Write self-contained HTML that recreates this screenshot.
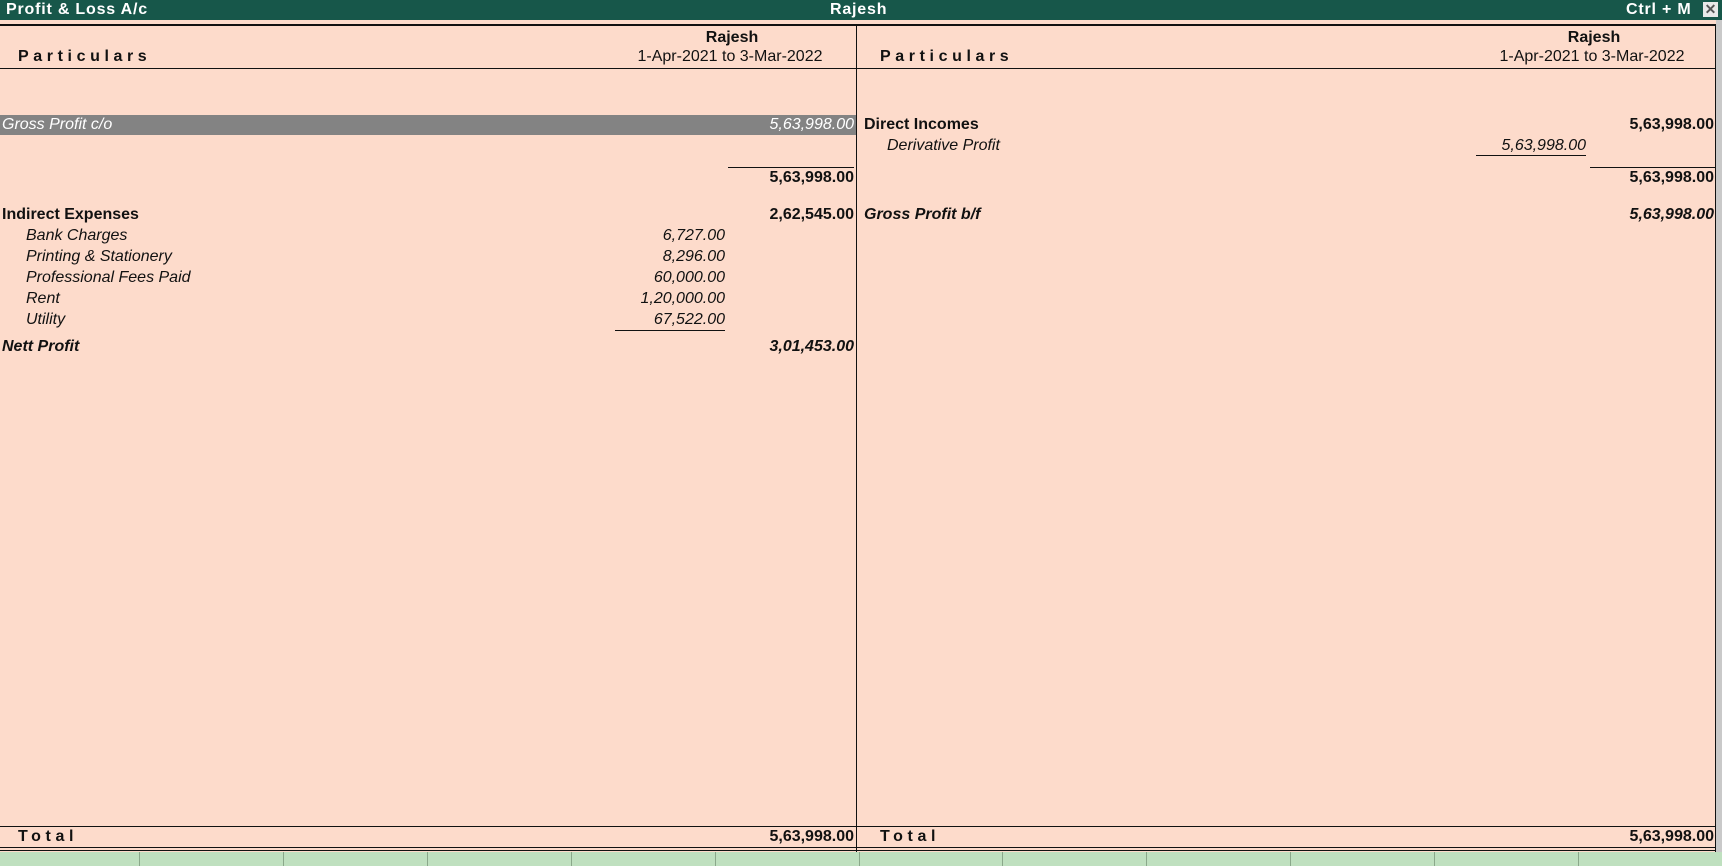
<!DOCTYPE html><html><head><style>
*{margin:0;padding:0;box-sizing:border-box}
body{width:1722px;height:866px;background:#fddbcb;font-family:"Liberation Sans",Arial,sans-serif;font-size:16px;color:#111;position:relative;overflow:hidden}
.a{position:absolute;white-space:nowrap;line-height:20px}
.r{text-align:right}
.b{font-weight:bold}.i{font-style:italic}
.h{position:absolute;background:#111}
.t{letter-spacing:4.6px;font-weight:bold}
</style></head><body>
<div style="position:absolute;left:0;top:0;width:1722px;height:20px;background:#17574a;color:#fff;font-weight:bold;font-size:16px">
<span class="a" style="left:6px;top:0;line-height:20px;letter-spacing:0.8px">Profit &amp; Loss A/c</span>
<span class="a" style="left:830px;top:0;line-height:20px;letter-spacing:0.8px">Rajesh</span>
<span class="a" style="left:1626px;top:0;line-height:20px;letter-spacing:0.8px">Ctrl + M</span>
<span style="position:absolute;left:1703px;top:2px;width:15px;height:15px;background:#e8e8e8;color:#555;font-size:14px;line-height:15px;text-align:center">✕</span>
</div>
<div class="h" style="left:0;top:24px;width:1716px;height:2px"></div>
<div class="h" style="left:1715px;top:24px;width:1px;height:828px"></div>
<div class="h" style="left:856px;top:26px;width:1px;height:826px"></div>
<div class="a b" style="left:680px;top:28px;width:104px;text-align:center">Rajesh</div>
<div class="a" style="left:625px;top:47px;width:210px;text-align:center">1-Apr-2021 to 3-Mar-2022</div>
<div class="a t" style="left:18px;top:47px">Particulars</div>
<div class="a b" style="left:1542px;top:28px;width:104px;text-align:center">Rajesh</div>
<div class="a" style="left:1487px;top:47px;width:210px;text-align:center">1-Apr-2021 to 3-Mar-2022</div>
<div class="a t" style="left:880px;top:47px">Particulars</div>
<div class="h" style="left:0;top:68px;width:1716px;height:1px"></div>

<div style="position:absolute;left:0;top:115px;width:856px;height:20px;background:#838383"></div>
<div class="a i" style="left:2px;top:115px;color:#fff">Gross Profit c/o</div>
<div class="a i r" style="left:700px;top:115px;width:154px;color:#fff">5,63,998.00</div>
<div class="a b" style="left:864px;top:115px">Direct Incomes</div>
<div class="a b r" style="left:1560px;top:115px;width:154px">5,63,998.00</div>
<div class="a i" style="left:887px;top:136px">Derivative Profit</div>
<div class="a i r" style="left:1430px;top:136px;width:156px">5,63,998.00</div>
<div class="h" style="left:1476px;top:155px;width:110px;height:1px"></div>

<div class="h" style="left:728px;top:167px;width:126px;height:1px"></div>
<div class="h" style="left:1590px;top:167px;width:125px;height:1px"></div>
<div class="a b r" style="left:700px;top:168px;width:154px">5,63,998.00</div>
<div class="a b r" style="left:1560px;top:168px;width:154px">5,63,998.00</div>

<div class="a b" style="left:2px;top:205px">Indirect Expenses</div>
<div class="a b r" style="left:700px;top:205px;width:154px">2,62,545.00</div>
<div class="a b i" style="left:864px;top:205px">Gross Profit b/f</div>
<div class="a b i r" style="left:1560px;top:205px;width:154px">5,63,998.00</div>
<div class="a i" style="left:26px;top:226px">Bank Charges</div><div class="a i r" style="left:600px;top:226px;width:125px">6,727.00</div>
<div class="a i" style="left:26px;top:247px">Printing &amp; Stationery</div><div class="a i r" style="left:600px;top:247px;width:125px">8,296.00</div>
<div class="a i" style="left:26px;top:268px">Professional Fees Paid</div><div class="a i r" style="left:600px;top:268px;width:125px">60,000.00</div>
<div class="a i" style="left:26px;top:289px">Rent</div><div class="a i r" style="left:600px;top:289px;width:125px">1,20,000.00</div>
<div class="a i" style="left:26px;top:310px">Utility</div><div class="a i r" style="left:600px;top:310px;width:125px">67,522.00</div>
<div class="h" style="left:615px;top:330px;width:110px;height:1px"></div>
<div class="a b i" style="left:2px;top:337px">Nett Profit</div>
<div class="a b i r" style="left:700px;top:337px;width:154px">3,01,453.00</div>

<div class="h" style="left:0;top:826px;width:1716px;height:1px"></div>
<div class="a t" style="left:18px;top:827px">Total</div>
<div class="a b r" style="left:700px;top:827px;width:154px">5,63,998.00</div>
<div class="a t" style="left:880px;top:827px">Total</div>
<div class="a b r" style="left:1560px;top:827px;width:154px">5,63,998.00</div>
<div class="h" style="left:0;top:847px;width:1716px;height:1px"></div>
<div class="h" style="left:0;top:850px;width:1716px;height:1px"></div>
<div style="position:absolute;left:0;top:852px;width:1722px;height:14px;background:#bfe0bf"></div>
<div style="position:absolute;left:1716px;top:20px;width:6px;height:832px;background:#c9c9c9"></div>
<div class="h" style="left:139px;top:852px;width:1px;height:14px;background:#8aa88a"></div>
<div class="h" style="left:283px;top:852px;width:1px;height:14px;background:#8aa88a"></div>
<div class="h" style="left:427px;top:852px;width:1px;height:14px;background:#8aa88a"></div>
<div class="h" style="left:571px;top:852px;width:1px;height:14px;background:#8aa88a"></div>
<div class="h" style="left:715px;top:852px;width:1px;height:14px;background:#8aa88a"></div>
<div class="h" style="left:859px;top:852px;width:1px;height:14px;background:#8aa88a"></div>
<div class="h" style="left:1002px;top:852px;width:1px;height:14px;background:#8aa88a"></div>
<div class="h" style="left:1146px;top:852px;width:1px;height:14px;background:#8aa88a"></div>
<div class="h" style="left:1290px;top:852px;width:1px;height:14px;background:#8aa88a"></div>
<div class="h" style="left:1434px;top:852px;width:1px;height:14px;background:#8aa88a"></div>
<div class="h" style="left:1578px;top:852px;width:1px;height:14px;background:#8aa88a"></div>
</body></html>
